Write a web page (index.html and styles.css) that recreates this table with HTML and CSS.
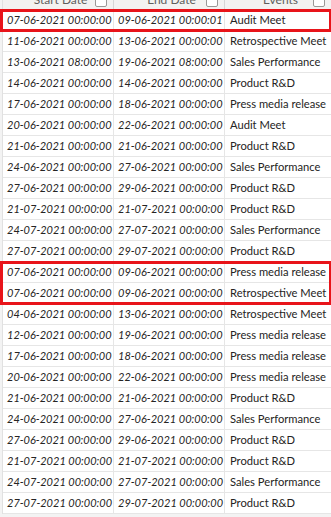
FILE: index.html
```html
<!DOCTYPE html>
<html>

<head>
  <meta charset="UTF-8" />
  <meta name="viewport" content="width=device-width, initial-scale=1.0" />
  <title>Events</title>
  <link rel="stylesheet" href="styles.css">
</head>

<body>
  <div class="table">
    <div class="row head">
      <div class="cell">Start Date <span class="filter"></span></div>
      <div class="cell">End Date <span class="filter"></span></div>
      <div class="cell">Events <span class="filter"></span></div>
    </div>

    <div class="mark">
      <div class="row"><div class="cell date">07-06-2021 00:00:00</div><div class="cell date">09-06-2021 00:00:01</div><div class="cell">Audit Meet</div></div>
    </div>
    <div class="row"><div class="cell date">11-06-2021 00:00:00</div><div class="cell date">13-06-2021 00:00:00</div><div class="cell">Retrospective Meet</div></div>
    <div class="row"><div class="cell date">13-06-2021 08:00:00</div><div class="cell date">19-06-2021 08:00:00</div><div class="cell">Sales Performance</div></div>
    <div class="row"><div class="cell date">14-06-2021 00:00:00</div><div class="cell date">14-06-2021 00:00:00</div><div class="cell">Product R&amp;D</div></div>
    <div class="row"><div class="cell date">17-06-2021 00:00:00</div><div class="cell date">18-06-2021 00:00:00</div><div class="cell">Press media release</div></div>
    <div class="row"><div class="cell date">20-06-2021 00:00:00</div><div class="cell date">22-06-2021 00:00:00</div><div class="cell">Audit Meet</div></div>
    <div class="row"><div class="cell date">21-06-2021 00:00:00</div><div class="cell date">21-06-2021 00:00:00</div><div class="cell">Product R&amp;D</div></div>
    <div class="row"><div class="cell date">24-06-2021 00:00:00</div><div class="cell date">27-06-2021 00:00:00</div><div class="cell">Sales Performance</div></div>
    <div class="row"><div class="cell date">27-06-2021 00:00:00</div><div class="cell date">29-06-2021 00:00:00</div><div class="cell">Product R&amp;D</div></div>
    <div class="row"><div class="cell date">21-07-2021 00:00:00</div><div class="cell date">21-07-2021 00:00:00</div><div class="cell">Product R&amp;D</div></div>
    <div class="row"><div class="cell date">24-07-2021 00:00:00</div><div class="cell date">27-07-2021 00:00:00</div><div class="cell">Sales Performance</div></div>
    <div class="row"><div class="cell date">27-07-2021 00:00:00</div><div class="cell date">29-07-2021 00:00:00</div><div class="cell">Product R&amp;D</div></div>

    <div class="mark">
      <div class="row"><div class="cell date">07-06-2021 00:00:00</div><div class="cell date">09-06-2021 00:00:00</div><div class="cell">Press media release</div></div>
      <div class="row"><div class="cell date">07-06-2021 00:00:00</div><div class="cell date">09-06-2021 00:00:00</div><div class="cell">Retrospective Meet</div></div>
    </div>
    <div class="row"><div class="cell date">04-06-2021 00:00:00</div><div class="cell date">13-06-2021 00:00:00</div><div class="cell">Retrospective Meet</div></div>
    <div class="row"><div class="cell date">12-06-2021 00:00:00</div><div class="cell date">19-06-2021 00:00:00</div><div class="cell">Press media release</div></div>
    <div class="row"><div class="cell date">17-06-2021 00:00:00</div><div class="cell date">18-06-2021 00:00:00</div><div class="cell">Press media release</div></div>
    <div class="row"><div class="cell date">20-06-2021 00:00:00</div><div class="cell date">22-06-2021 00:00:00</div><div class="cell">Press media release</div></div>
    <div class="row"><div class="cell date">21-06-2021 00:00:00</div><div class="cell date">21-06-2021 00:00:00</div><div class="cell">Product R&amp;D</div></div>
    <div class="row"><div class="cell date">24-06-2021 00:00:00</div><div class="cell date">27-06-2021 00:00:00</div><div class="cell">Sales Performance</div></div>
    <div class="row"><div class="cell date">27-06-2021 00:00:00</div><div class="cell date">29-06-2021 00:00:00</div><div class="cell">Product R&amp;D</div></div>
    <div class="row"><div class="cell date">21-07-2021 00:00:00</div><div class="cell date">21-07-2021 00:00:00</div><div class="cell">Product R&amp;D</div></div>
    <div class="row"><div class="cell date">24-07-2021 00:00:00</div><div class="cell date">27-07-2021 00:00:00</div><div class="cell">Sales Performance</div></div>
    <div class="row"><div class="cell date">27-07-2021 00:00:00</div><div class="cell date">29-07-2021 00:00:00</div><div class="cell">Product R&amp;D</div></div>
  </div>
</body>

</html>
```

FILE: styles.css
```css
body {
  margin: 0;
  font-family: Lato, "Open Sans", Arial, sans-serif;
  font-size: 11.2px;
  color: #252423;
  background: #f3f3f3;
  height: 517px;
  overflow: hidden;
}

.table {
  width: 328px;
  margin-left: 2px;
  background: #fff;
  border-left: 1px solid #e1e1e1;
  border-right: 1px solid #e1e1e1;
}

.row {
  display: grid;
  grid-template-columns: 111px 111px 1fr;
  height: 21px;
  box-sizing: border-box;
  border-bottom: 1px solid #e6e6e6;
}

.cell {
  padding-left: 5px;
  line-height: 20px;
  white-space: nowrap;
  overflow: hidden;
  border-right: 1px solid #e6e6e6;
}

.cell:last-child {
  border-right: none;
}

.date {
  font-style: italic;
  font-size: 11px;
  padding-left: 4px;
}

/* header is scrolled mostly out of view */
.head {
  height: 24px;
  margin-top: -14px;
  background: #f3f2f1;
  color: #605e5c;
  border-bottom: 1px solid #d6d6d6;
}

.head .cell {
  position: relative;
  text-align: center;
  font-size: 12px;
  line-height: 27px;
  border-right-color: #d6d6d6;
}

.filter {
  position: absolute;
  top: 7px;
  right: 6px;
  width: 12px;
  height: 14px;
  box-sizing: border-box;
  background: #fff;
  border: 1px solid #9a9896;
  border-radius: 2px;
}

.mark {
  position: relative;
}

.mark::after {
  content: "";
  position: absolute;
  top: -1px;
  left: -3px;
  right: -1px;
  bottom: -1px;
  border: 3px solid #e8141a;
  pointer-events: none;
}
```
